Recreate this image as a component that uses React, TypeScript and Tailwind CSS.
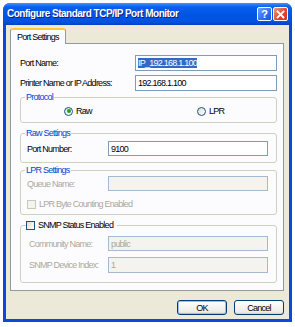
import React from "react";

const F = "font-['Liberation_Sans',Arial,sans-serif]";
const T = "text-[9px] leading-[10px] tracking-[-0.75px]";

function Input({ children, disabled, className = "" }: { children?: React.ReactNode; disabled?: boolean; className?: string }) {
  return (
    <div
      className={`h-[15px] border flex items-center px-[2px] ${T} ${
        disabled ? "border-[#A5B9CF] bg-[#F4F3EE] text-[#ACA899]" : "border-[#7F9DB9] bg-white text-black"
      } ${className}`}
    >
      {children}
    </div>
  );
}

function Check({ disabled }: { disabled?: boolean }) {
  return (
    <span
      className={`inline-block w-[9px] h-[9px] border ${
        disabled ? "border-[#CAC8BB] bg-[#F4F3EE]" : "border-[#1C5180] bg-[linear-gradient(135deg,#DCDCD7,#FFFFFF)]"
      }`}
    />
  );
}

function Radio({ checked }: { checked?: boolean }) {
  return (
    <span className="inline-flex items-center justify-center w-[9px] h-[9px] rounded-full border border-[#1C5180] bg-[linear-gradient(135deg,#DCDCD7,#FFFFFF)]">
      {checked && <span className="w-[4px] h-[4px] rounded-full bg-[#21A121]" />}
    </span>
  );
}

export default function App() {
  return (
    <div className={`w-[295px] h-[327px] bg-white pt-[3px] pl-[3px] ${F}`}>
      <div className="w-[289px] h-[319px] flex flex-col rounded-t-[7px] bg-[#0B49DD] overflow-hidden">
        {/* Title bar */}
        <div className="h-[22px] shrink-0 flex items-center pl-[4px] pr-[4px] bg-[linear-gradient(180deg,#3E93FF_0%,#0A5EEB_18%,#0055E5_55%,#0252E0_85%,#0340C5_100%)]">
          <span className="text-white font-bold text-[10px] leading-[12px] tracking-[-0.5px] [text-shadow:1px_1px_0_#0A1E78]">
            Configure Standard TCP/IP Port Monitor
          </span>
          <div className="ml-auto flex gap-[1px]">
            <div className="w-[15px] h-[14px] rounded-[2px] border border-white bg-[linear-gradient(135deg,#6FA4FF,#2A6DF2_60%,#1B55D8)] flex items-center justify-center text-white font-bold text-[11px] leading-none">
              ?
            </div>
            <div className="w-[15px] h-[14px] rounded-[2px] border border-white bg-[linear-gradient(135deg,#F29A80,#E0482E_55%,#C33A1C)] flex items-center justify-center">
              <svg width="9" height="9" viewBox="0 0 9 9">
                <path d="M1.5 1.5 L7.5 7.5 M7.5 1.5 L1.5 7.5" stroke="white" strokeWidth="1.8" strokeLinecap="square" />
              </svg>
            </div>
          </div>
        </div>
        {/* Body */}
        <div className="flex-1 mx-[3px] mb-[3px] bg-[#ECE9D8] pt-[3px] pl-[4px] pr-[5px] flex flex-col">
          {/* Tab */}
          <div className="flex">
            <div className="relative z-10 -mb-[1px] h-[16px] px-[6px] rounded-t-[3px] border-x border-[#919B9C] border-t-[2px] border-t-[#FFC83C] bg-[#FCFCFE] flex items-center">
              <span className={`${T} text-black`}>Port Settings</span>
            </div>
          </div>
          {/* Panel */}
          <div className="border border-[#919B9C] bg-[#FCFCFE] pt-[11px] pl-[9px] pr-[6px] pb-[7px] flex flex-col">
            <div className="flex items-center h-[16px]">
              <span className={`w-[115px] ${T} text-black`}>Port Name:</span>
              <Input className="flex-1 h-[16px]">
                <span className="bg-[#316AC5] text-white">IP_192.168.1.100</span>
              </Input>
            </div>
            <div className="flex items-center h-[16px] mt-[4px]">
              <span className={`w-[115px] ${T} text-black`}>Printer Name or IP Address:</span>
              <Input className="flex-1 h-[16px]">192.168.1.100</Input>
            </div>

            <fieldset className="mt-[1px] border border-[#D0D0BF] rounded-[3px] pt-[4px] pb-[6px]">
              <legend className={`ml-[4px] px-[1px] ${T} text-[#0046D5]`}>Protocol</legend>
              <div className="flex items-center pl-[43px] h-[10px]">
                <div className="w-[133px] flex items-center gap-[3px]">
                  <Radio checked />
                  <span className={`${T} text-black`}>Raw</span>
                </div>
                <div className="flex items-center gap-[3px]">
                  <Radio />
                  <span className={`${T} text-black`}>LPR</span>
                </div>
              </div>
            </fieldset>

            <fieldset className="mt-[5px] border border-[#D0D0BF] rounded-[3px] pt-[3px] pb-[6px] pl-[6px] pr-[8px]">
              <legend className={`ml-[-2px] px-[1px] ${T} text-[#0046D5]`}>Raw Settings</legend>
              <div className="flex items-center">
                <span className={`w-[81px] ${T} text-black`}>Port Number:</span>
                <Input className="flex-1">9100</Input>
              </div>
            </fieldset>

            <fieldset className="mt-[2px] border border-[#D0D0BF] rounded-[3px] pt-[1px] pb-[5px] pl-[6px] pr-[8px]">
              <legend className={`ml-[-2px] px-[1px] ${T} text-[#0046D5]`}>LPR Settings</legend>
              <div className="flex items-center">
                <span className={`w-[81px] ${T} text-[#ACA899]`}>Queue Name:</span>
                <Input disabled className="flex-1" />
              </div>
              <div className="mt-[8px] flex items-center gap-[3px] h-[10px]">
                <Check disabled />
                <span className={`${T} text-[#ACA899]`}>LPR Byte Counting Enabled</span>
              </div>
            </fieldset>

            <fieldset className="mt-[5px] border border-[#D0D0BF] rounded-[3px] pt-[6px] pb-[9px] pl-[8px] pr-[8px]">
              <legend className="ml-[-3px] pr-[4px] flex items-center gap-[3px] h-[10px]">
                <Check />
                <span className={`${T} text-black`}>SNMP Status Enabled</span>
              </legend>
              <div className="flex items-center">
                <span className={`w-[79px] ${T} text-[#ACA899]`}>Community Name:</span>
                <Input disabled className="flex-1">public</Input>
              </div>
              <div className="mt-[6px] flex items-center">
                <span className={`w-[79px] ${T} text-[#ACA899]`}>SNMP Device Index:</span>
                <Input disabled className="flex-1 h-[16px]">1</Input>
              </div>
            </fieldset>
          </div>
          {/* Buttons */}
          <div className="mt-[9px] flex justify-end gap-[7px]">
            <button className="w-[50px] h-[15px] rounded-[3px] border border-[#003C74] bg-[linear-gradient(180deg,#FFFFFF,#ECEBE6_85%,#D6D0C5)] flex items-center justify-center shadow-[inset_0_0_0_1px_#9DBEF5]">
              <span className={`${T} text-black`}>OK</span>
            </button>
            <button className="w-[50px] h-[15px] rounded-[3px] border border-[#003C74] bg-[linear-gradient(180deg,#FFFFFF,#ECEBE6_85%,#D6D0C5)] flex items-center justify-center">
              <span className={`${T} text-black`}>Cancel</span>
            </button>
          </div>
        </div>
      </div>
    </div>
  );
}
